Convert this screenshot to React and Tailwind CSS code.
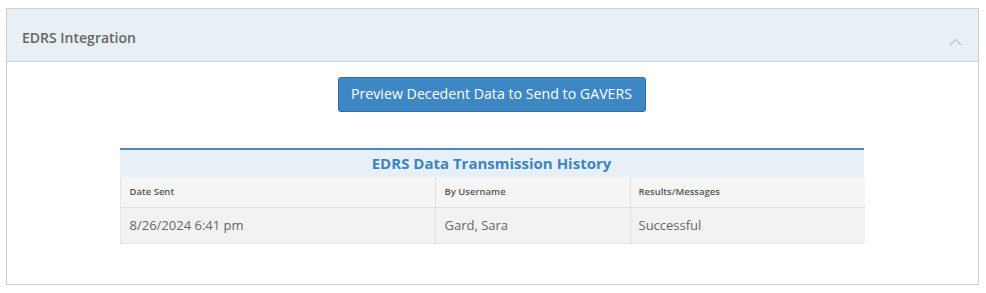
export default function App() {
  return (
    <div className="w-[986px] h-[293px] bg-white pt-[8px] pl-[6px]" style={{ fontFamily: '"Open Sans", "Noto Sans", sans-serif' }}>
      <div className="w-[973px] h-[277px] border border-[#cfcfcf] flex flex-col">
        <div className="h-[53px] bg-[#e8eff5] border-b border-[#cfd4d8] flex items-center justify-between pl-[15px] pr-[16px]">
          <span className="text-[14px] font-semibold text-[#666] leading-none mt-[6px]">EDRS Integration</span>
          <svg width="13" height="8" viewBox="0 0 13 8" className="mt-[14px]">
            <path d="M1 7 L6.5 1.5 L12 7" fill="none" stroke="#c3c8cc" strokeWidth="1.6" />
          </svg>
        </div>
        <div className="flex flex-col items-center pt-[15px] pr-[2px]">
          <button className="w-[308px] h-[35px] bg-[#3c87c4] border border-[#2d6ea3] rounded-[3px] text-white text-[14.2px] leading-none">
            Preview Decedent Data to Send to GAVERS
          </button>
          <div className="w-[744px] mt-[36px] border-t-2 border-[#4a88bf]">
            <div className="h-[27px] bg-[#e8f0f7] flex items-center justify-center text-[15px] font-bold text-[#3c84c0]">
              EDRS Data Transmission History
            </div>
            <div className="grid grid-cols-[315px_195px_234px] border-x border-b border-[#e6e6e6]">
              <div className="h-[31px] bg-[#f5f5f6] border-b border-r border-[#dedede] flex items-center pl-[9px] text-[9.5px] font-semibold text-[#555]">Date Sent</div>
              <div className="h-[31px] bg-[#f5f5f6] border-b border-r border-[#dedede] flex items-center pl-[9px] text-[9.5px] font-semibold text-[#555]">By Username</div>
              <div className="h-[31px] bg-[#f5f5f6] border-b border-[#dedede] flex items-center pl-[8px] text-[9.5px] font-semibold text-[#555]">Results/Messages</div>
              <div className="h-[35px] bg-[#f2f2f2] border-r border-[#e2e2e2] flex items-center pl-[9px] text-[13px] text-[#666]">8/26/2024 6:41 pm</div>
              <div className="h-[35px] bg-[#f2f2f2] border-r border-[#e2e2e2] flex items-center pl-[9px] text-[13px] text-[#666]">Gard, Sara</div>
              <div className="h-[35px] bg-[#f2f2f2] flex items-center pl-[8px] text-[13px] text-[#666]">Successful</div>
            </div>
          </div>
        </div>
      </div>
    </div>
  );
}
